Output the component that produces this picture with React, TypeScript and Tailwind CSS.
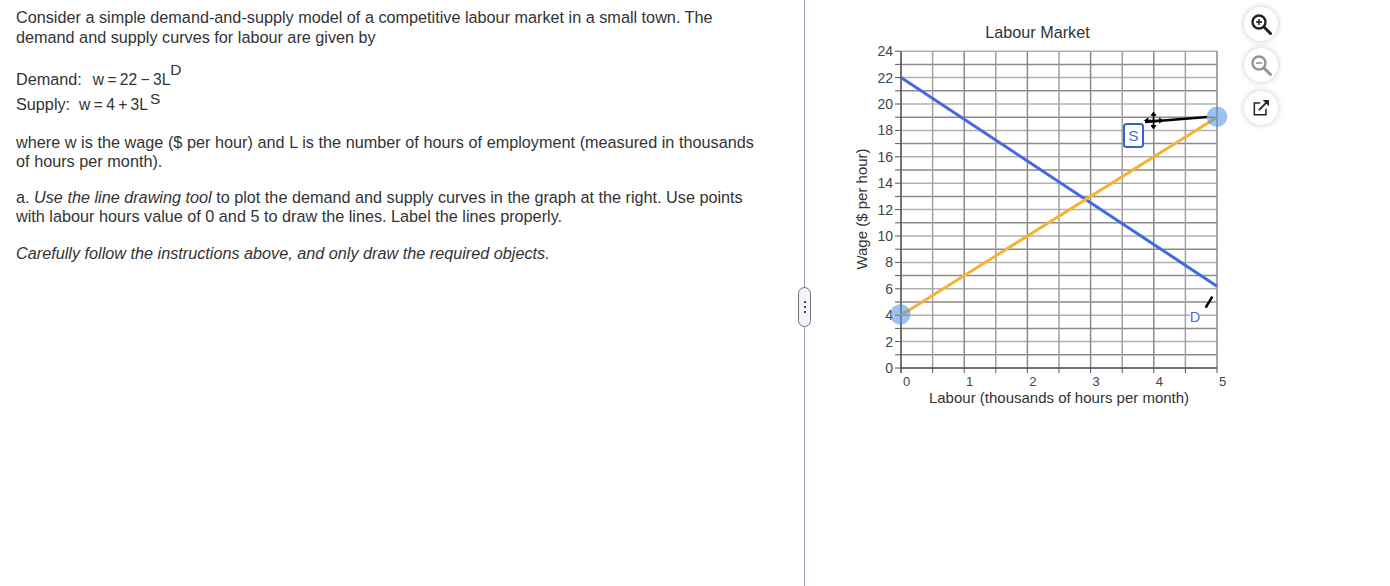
// App.tsx
import React from "react";

const X0 = 901;
const XU = 63.2;
const Y0 = 368;
const YU = 13.2;

const px = (v: number) => X0 + v * XU;
const py = (v: number) => Y0 - v * YU;

const xGrid = Array.from({ length: 11 }, (_, i) => i / 2);
const yGrid = Array.from({ length: 25 }, (_, i) => i);

function LabourChart() {
  return (
    <svg
      viewBox="850 10 390 400"
      width={390}
      height={400}
      className="mt-[3px] shrink-0"
      style={{ fontFamily: '"Liberation Sans", Arial, sans-serif' }}
    >
      <text x={1037.5} y={37.5} textAnchor="middle" fontSize={16.2} fill="#333">
        Labour Market
      </text>

      {/* grid */}
      {yGrid.map((v) => (
        <line
          key={v}
          x1={X0}
          x2={px(5)}
          y1={py(v)}
          y2={py(v)}
          stroke={v % 2 === 0 ? "#b0b0b0" : "#8a8a8a"}
          strokeWidth={1.5}
        />
      ))}
      {xGrid.map((v) => (
        <line
          key={v}
          x1={px(v)}
          x2={px(v)}
          y1={py(24)}
          y2={py(0)}
          stroke={Number.isInteger(v) ? "#8a8a8a" : "#a0a0a0"}
          strokeWidth={1.5}
        />
      ))}

      {/* axes and ticks */}
      <line x1={X0} x2={X0} y1={py(24)} y2={py(0) + 5} stroke="#555" strokeWidth={1.3} />
      <line x1={X0} x2={px(5)} y1={py(0)} y2={py(0)} stroke="#555" strokeWidth={1.3} />
      {yGrid.map((v) => (
        <line key={v} x1={X0 - 6} x2={X0} y1={py(v)} y2={py(v)} stroke="#555" />
      ))}
      {xGrid.map((v) => (
        <line key={v} x1={px(v)} x2={px(v)} y1={py(0)} y2={py(0) + 5} stroke="#555" />
      ))}

      {/* tick labels */}
      {yGrid
        .filter((v) => v % 2 === 0)
        .map((v) => (
          <text key={v} x={X0 - 8} y={py(v) + 5} textAnchor="end" fontSize={14} fill="#444">
            {v}
          </text>
        ))}
      {[0, 1, 2, 3, 4, 5].map((v) => (
        <text key={v} x={px(v) + 5.5} y={386} textAnchor="middle" fontSize={13} fill="#444">
          {v}
        </text>
      ))}

      <text x={1059} y={403} textAnchor="middle" fontSize={15} fill="#333">
        Labour (thousands of hours per month)
      </text>
      <text
        x={0}
        y={0}
        transform="translate(867 209) rotate(-90)"
        textAnchor="middle"
        fontSize={15}
        fill="#333"
      >
        Wage ($ per hour)
      </text>

      {/* demand and supply */}
      <line x1={px(0)} y1={py(22)} x2={px(5)} y2={py(6.2)} stroke="#4169e1" strokeWidth={3} />
      <line x1={px(0)} y1={py(4)} x2={px(5)} y2={py(19)} stroke="#f5b335" strokeWidth={3} />

      {/* point handles */}
      <circle cx={900.3} cy={314.5} r={10.3} fill="#4a90e2" fillOpacity={0.55} />
      <circle cx={1217} cy={116.8} r={10.3} fill="#4a90e2" fillOpacity={0.55} />

      {/* S label with leader */}
      <line x1={1145} y1={122} x2={1207} y2={117} stroke="#000" strokeWidth={2.6} />
      <rect
        x={1124}
        y={124}
        width={19}
        height={23}
        rx={2.5}
        fill="#fff"
        stroke="#3366cc"
        strokeWidth={2}
      />
      <text x={1133.5} y={141} textAnchor="middle" fontSize={15.5} fill="#3f6fd8">
        S
      </text>

      {/* move cursor */}
      <g stroke="#000" strokeWidth={1.6} fill="#000">
        <line x1={1153.5} y1={114} x2={1153.5} y2={127} />
        <line x1={1146} y1={120.5} x2={1161} y2={120.5} />
        <polygon points="1153.5,112 1151,115.5 1156,115.5" strokeWidth={0.8} />
        <polygon points="1153.5,129 1151,125.5 1156,125.5" strokeWidth={0.8} />
        <polygon points="1144.5,120.5 1148,118 1148,123" strokeWidth={0.8} />
        <polygon points="1163,120.5 1159.5,118 1159.5,123" strokeWidth={0.8} />
      </g>

      {/* D label with leader */}
      <line x1={1205.7} y1={307.7} x2={1212.3} y2={296.7} stroke="#000" strokeWidth={2.5} />
      <rect x={1190} y={311} width={10} height={12} fill="#fff" />
      <text x={1195} y={322} textAnchor="middle" fontSize={14.5} fill="#3f6fd8">
        D
      </text>
    </svg>
  );
}

function ToolButton({ gap, children }: { gap: string; children: React.ReactNode }) {
  return (
    <div
      className={`flex h-[34px] w-[34px] items-center justify-center rounded-full bg-white shadow-[0_0_6px_rgba(0,0,0,0.22)] ${gap}`}
    >
      {children}
    </div>
  );
}

function MagnifierIcon({ plus, color }: { plus: boolean; color: string }) {
  return (
    <svg viewBox="0 0 24 24" width={24} height={24} fill="none" stroke={color} strokeWidth={2.4}>
      <circle cx={10} cy={10} r={6.5} />
      <line x1={15} y1={15} x2={21.5} y2={21.5} strokeWidth={3} strokeLinecap="round" />
      <line x1={7} y1={10} x2={13} y2={10} strokeWidth={1.6} />
      {plus && <line x1={10} y1={7} x2={10} y2={13} strokeWidth={1.6} />}
    </svg>
  );
}

function ExpandIcon() {
  return (
    <svg viewBox="0 0 24 24" width={20} height={20} fill="none" stroke="#222" strokeWidth={1.8}>
      <path d="M11 6H4v14h14v-7" />
      <path d="M9.5 14.5 19 5" strokeWidth={2.2} />
      <polygon points="14,2.5 21.5,2.5 21.5,10" fill="#222" stroke="none" />
    </svg>
  );
}

export default function App() {
  return (
    <div className="relative flex h-[586px] w-[1390px] overflow-hidden bg-white font-['Liberation_Sans',Arial,sans-serif] text-[16.23px] leading-[19px] text-[#333]">
      {/* Question text */}
      <div className="w-[805px] shrink-0 border-r border-[#9aa3b5] pl-[16px] pt-[8px] pr-[45px]">
        <p className="leading-[19.5px]">
          Consider a simple demand-and-supply model of a competitive labour market in a small
          town. The demand and supply curves for labour are given by
        </p>

        <div className="mt-[20px] leading-[24px]">
          <div className="flex items-baseline">
            <span>Demand:</span>
            <span className="ml-[11px] text-[15.6px] [word-spacing:-1px]">w = 22 − 3L</span>
            <sup className="top-[-10px] text-[15.5px] leading-none">D</sup>
          </div>
          <div className="flex items-baseline">
            <span>Supply:</span>
            <span className="ml-[9px] text-[15.6px] [word-spacing:-1px]">w = 4 + 3L</span>
            <sup className="top-[-6px] ml-[2px] text-[15.5px] leading-none">S</sup>
          </div>
        </div>

        <p className="mt-[16px] [word-spacing:0.1px]">
          where w is the wage ($ per hour) and L is the number of hours of employment (measured
          in thousands of hours per month).
        </p>

        <p className="mt-[17px]">
          a. <i>Use the line drawing tool</i> to plot the demand and supply curves in the graph at
          the right. Use points with labour hours value of 0 and 5 to draw the lines. Label the
          lines properly.
        </p>

        <p className="mt-[18px] italic">
          Carefully follow the instructions above, and only draw the required objects.
        </p>
      </div>

      {/* Divider grip */}
      <div className="absolute left-[798px] top-[287px] flex h-[40px] w-[13px] flex-col items-center justify-center gap-[3px] rounded-full border border-[#6b7280] bg-[#f3f4f6]">
        <span className="h-[2px] w-[2px] bg-[#444]" />
        <span className="h-[2px] w-[2px] bg-[#444]" />
        <span className="h-[2px] w-[2px] bg-[#444]" />
      </div>

      {/* Graph and tools */}
      <div className="flex items-start pl-[45px] pt-[7px]">
        <LabourChart />
        <div className="ml-[4px] flex flex-col">
          <ToolButton gap="">
            <MagnifierIcon plus color="#222" />
          </ToolButton>
          <ToolButton gap="mt-[7px]">
            <MagnifierIcon plus={false} color="#949494" />
          </ToolButton>
          <ToolButton gap="mt-[9px]">
            <ExpandIcon />
          </ToolButton>
        </div>
      </div>
    </div>
  );
}
